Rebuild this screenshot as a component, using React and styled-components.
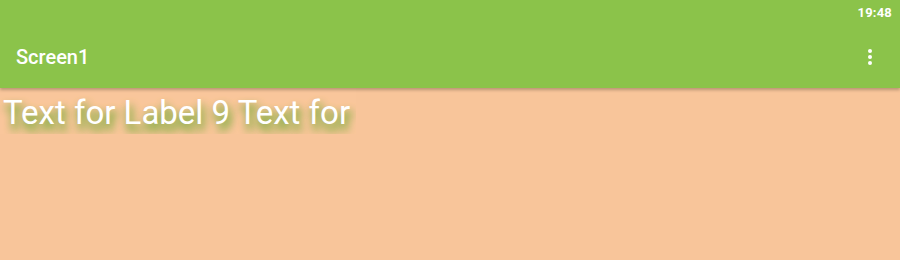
import React from 'react';
import styled, { createGlobalStyle } from 'styled-components';

const Global = createGlobalStyle`
    html, body{
        margin: 0;
        padding: 0;
        background: #f8c59a;
        font-family: Roboto, "Noto Sans", sans-serif;
    }
`;

const Screen = styled.div`
    width: 900px;
    height: 260px;
    background: #f8c59a;
    overflow: hidden;
`;

const AppBar = styled.header`
    background: #8bc34a;
    height: 88px;
    display: flex;
    flex-direction: column;
    box-shadow: 0 2px 3px rgba(0, 0, 0, 0.25);
    position: relative;
    z-index: 1;
`;

const StatusBar = styled.div`
    height: 24px;
    display: flex;
    justify-content: flex-end;
    align-items: center;
    padding: 0 8px;
    color: #ffffff;
    font-size: 13px;
    font-weight: 700;
    letter-spacing: 0.2px;
`;

const Toolbar = styled.div`
    flex: 1;
    display: flex;
    align-items: center;
    justify-content: space-between;
    padding: 2px 16px 0 16px;
    color: #ffffff;
    p{
        margin: 0;
        font-size: 20px;
        font-weight: 500;
    }
`;

const MenuButton = styled.div`
    display: flex;
    flex-direction: column;
    gap: 2px;
    margin-right: 12px;
    span{
        width: 4px;
        height: 4px;
        border-radius: 50%;
        background: #ffffff;
    }
`;

const Label = styled.div`
    display: inline-block;
    overflow: hidden;
    height: 43px;
    background: #f9c69b;
    color: #ffffff;
    font-size: 33px;
    line-height: 43px;
    padding: 3px 6px 0 3px;
    text-shadow: 2px 6px 8px #84ae42, 2px 7px 10px #8fb04e;
    white-space: nowrap;
`;

const App = () => {
    return (
        <Screen>
            <Global />
            <AppBar>
                <StatusBar>19:48</StatusBar>
                <Toolbar>
                    <p>Screen1</p>
                    <MenuButton>
                        <span />
                        <span />
                        <span />
                    </MenuButton>
                </Toolbar>
            </AppBar>
            <Label>Text for Label 9 Text for</Label>
        </Screen>
    );
};

export default App;
